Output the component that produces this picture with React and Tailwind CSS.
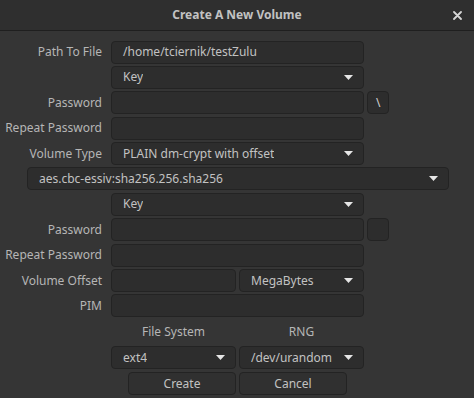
import React from "react";

const font = { fontFamily: '"Noto Sans", "Open Sans", sans-serif' };

function Caret() {
  return (
    <svg width="9" height="5" viewBox="0 0 9 5" className="shrink-0">
      <path d="M0 0 L9 0 L4.5 5 Z" fill="#e6e6e6" />
    </svg>
  );
}

function Field({ children, className = "" }) {
  return (
    <div
      className={`h-[23px] flex items-center pl-[11px] pr-[10px] rounded-[4px] border border-[#232323] bg-[#2d2d2d] text-[12px] text-[#c2c2c2] ${className}`}
    >
      {children}
    </div>
  );
}

function Combo({ text, className = "" }) {
  return (
    <Field className={`justify-between ${className}`}>
      <span className="truncate">{text}</span>
      <Caret />
    </Field>
  );
}

function Label({ children }) {
  return (
    <div className="w-[103px] shrink-0 text-right pr-[1px] text-[12px] text-[#b6b6b6] whitespace-nowrap">
      {children}
    </div>
  );
}

function Row({ label, children }) {
  return (
    <div className="flex items-center h-[23px]">
      <Label>{label}</Label>
      <div className="ml-[8px] flex items-center gap-[3px]">{children}</div>
    </div>
  );
}

export default function App() {
  return (
    <div
      className="w-[474px] h-[398px] bg-[#353535] overflow-hidden flex flex-col"
      style={font}
    >
      <div className="h-[31px] shrink-0 bg-[#2f2f2f] border-b border-[#1f1f1f] relative flex items-center justify-center">
        <span className="text-[12px] font-bold text-[#c2c2c2]">Create A New Volume</span>
        <svg
          width="9"
          height="9"
          viewBox="0 0 9 9"
          className="absolute left-[453px] top-[11px]"
        >
          <path d="M1 1 L8 8 M8 1 L1 8" stroke="#d6d6d6" strokeWidth="1.8" strokeLinecap="round" />
        </svg>
      </div>
      <div className="flex flex-col gap-[2.4px] pt-[9.5px]">
        <Row label="Path To File">
          <Field className="w-[253px]">/home/tciernik/testZulu</Field>
        </Row>
        <Row label="">
          <Combo text="Key" className="w-[253px]" />
        </Row>
        <Row label="Password">
          <Field className="w-[253px]" />
          <div className="w-[22px] h-[23px] rounded-[4px] border border-[#232323] bg-[#2d2d2d] text-[12px] text-[#d0d0d0] flex items-center pl-[8px]">
            \
          </div>
        </Row>
        <Row label="Repeat Password">
          <Field className="w-[253px]" />
        </Row>
        <Row label="Volume Type">
          <Combo text="PLAIN dm-crypt with offset" className="w-[253px]" />
        </Row>
        <div className="flex h-[23px] pl-[27px]">
          <Combo text="aes.cbc-essiv:sha256.256.sha256" className="w-[422px] pl-[8px]" />
        </div>
        <Row label="">
          <Combo text="Key" className="w-[253px]" />
        </Row>
        <Row label="Password">
          <Field className="w-[253px]" />
          <div className="w-[22px] h-[23px] rounded-[4px] border border-[#232323] bg-[#2d2d2d]" />
        </Row>
        <Row label="Repeat Password">
          <Field className="w-[253px]" />
        </Row>
        <Row label="Volume Offset">
          <Field className="w-[125px]" />
          <Combo text="MegaBytes" className="w-[125px]" />
        </Row>
        <Row label="PIM">
          <Field className="w-[253px]" />
        </Row>
      </div>
      <div className="flex h-[28px] items-center pl-[111px] pt-[1px]">
        <div className="w-[125px] text-center text-[12px] text-[#b6b6b6]">File System</div>
        <div className="w-[125px] ml-[3px] text-center text-[12px] text-[#b6b6b6]">RNG</div>
      </div>
      <div className="flex flex-col gap-[3px] pl-[111px] pt-[1px]">
        <div className="flex gap-[3px]">
          <Combo text="ext4" className="w-[125px]" />
          <Combo text="/dev/urandom" className="w-[125px]" />
        </div>
        <div className="flex gap-[3px] pl-[17px]">
          <div className="w-[108px] h-[23px] rounded-[4px] border border-[#232323] bg-[#303030] flex items-center justify-center text-[12px] text-[#c2c2c2]">
            Create
          </div>
          <div className="w-[108px] h-[23px] rounded-[4px] border border-[#232323] bg-[#303030] flex items-center justify-center text-[12px] text-[#c2c2c2]">
            Cancel
          </div>
        </div>
      </div>
    </div>
  );
}
